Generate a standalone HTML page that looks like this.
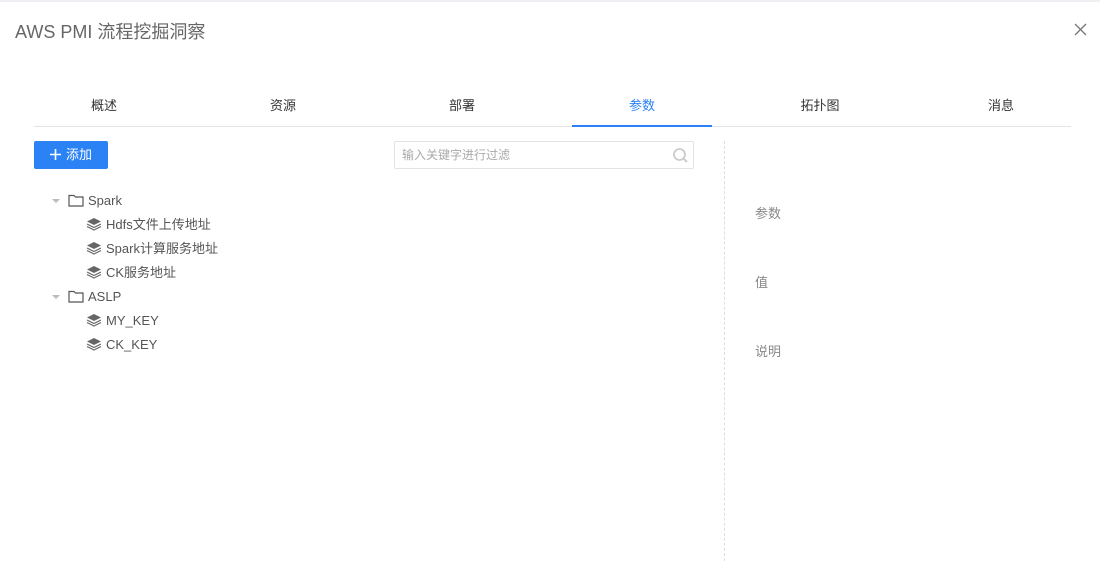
<!DOCTYPE html>
<html><head><meta charset="utf-8"><style>
*{margin:0;padding:0;box-sizing:border-box}
body{width:1100px;height:557px;background:#fff;font-family:"Liberation Sans","Noto Sans CJK SC",sans-serif;position:relative;overflow:hidden;color:#333}
.topline{position:absolute;left:0;top:0;width:1100px;height:2px;background:#eef0f3}
.title{position:absolute;left:15px;top:18px;font-size:18px;color:#666}
.close{position:absolute;left:1073px;top:22px}
.tabs{position:absolute;left:34px;top:94px;width:1037px;height:33px;border-bottom:1px solid #e2e4ea}
.tab{position:absolute;top:0;width:140px;text-align:center;font-size:13px;line-height:24px;color:#333}
.tab.act{color:#2b82f5;border-bottom:2px solid #2b82f5;height:33px}
.btn{position:absolute;left:34px;top:141px;width:74px;height:28px;background:#2b82f5;border-radius:2px;color:#fff;font-size:13px;line-height:28px;padding-left:32px}
.search{position:absolute;left:394px;top:141px;width:300px;height:28px;border:1px solid #e3e3e3;border-radius:2px;font-size:12px;color:#aaa;line-height:26px;padding-left:7px}
.vline{position:absolute;left:724px;top:141px;height:420px;border-left:1px dashed #ddd}
.row{position:absolute;font-size:13px;color:#555;line-height:16px}
.lbl{position:absolute;left:755px;font-size:13px;color:#888}
</style></head><body>
<div class="topline"></div>
<div class="title">AWS PMI 流程挖掘洞察</div>
<svg class="close" width="15" height="15" viewBox="0 0 15 15"><path d="M2 2L13 13M13 2L2 13" stroke="#777" stroke-width="1.3"/></svg>
<div class="tabs">
<div class="tab" style="left:0px">概述</div>
<div class="tab" style="left:179px">资源</div>
<div class="tab" style="left:358px">部署</div>
<div class="tab act" style="left:538px">参数</div>
<div class="tab" style="left:716px">拓扑图</div>
<div class="tab" style="left:897px">消息</div>
</div>
<div class="btn">添加</div>
<svg style="position:absolute;left:49px;top:148px" width="13" height="13"><path d="M6.5 1V12M1 6.5H12" stroke="#fff" stroke-width="1.6"/></svg>
<div class="search">输入关键字进行过滤</div>
<svg style="position:absolute;left:672px;top:147px" width="17" height="17"><circle cx="7.5" cy="7.5" r="5.5" fill="none" stroke="#ccc" stroke-width="1.8"/><path d="M11.5 11.5L15 15" stroke="#ccc" stroke-width="2"/></svg>
<div class="vline"></div>

<svg width="0" height="0" style="position:absolute"><defs>
<symbol id="fold" viewBox="0 0 16 14"><path d="M1 2.5H6L7.5 4H15V13H1Z" fill="none" stroke="#555" stroke-width="1.2"/></symbol>
<symbol id="lay" viewBox="0 0 16 14"><path d="M8 1L15 4.5L8 8L1 4.5Z" fill="#666"/><path d="M1 7L8 10.5L15 7M1 9.5L8 13L15 9.5" fill="none" stroke="#666" stroke-width="1.2"/></symbol>
<symbol id="car" viewBox="0 0 8 6"><path d="M0 1H8L4 5Z" fill="#bbb"/></symbol>
</defs></svg>

<svg style="position:absolute;left:52px;top:198px" width="8" height="6"><use href="#car"/></svg>
<svg style="position:absolute;left:68px;top:193px" width="16" height="14"><use href="#fold"/></svg>
<div class="row" style="left:88px;top:193px">Spark</div>
<svg style="position:absolute;left:86px;top:217px" width="16" height="14"><use href="#lay"/></svg>
<div class="row" style="left:106px;top:217px">Hdfs文件上传地址</div>
<svg style="position:absolute;left:86px;top:241px" width="16" height="14"><use href="#lay"/></svg>
<div class="row" style="left:106px;top:241px">Spark计算服务地址</div>
<svg style="position:absolute;left:86px;top:265px" width="16" height="14"><use href="#lay"/></svg>
<div class="row" style="left:106px;top:265px">CK服务地址</div>
<svg style="position:absolute;left:52px;top:294px" width="8" height="6"><use href="#car"/></svg>
<svg style="position:absolute;left:68px;top:289px" width="16" height="14"><use href="#fold"/></svg>
<div class="row" style="left:88px;top:289px">ASLP</div>
<svg style="position:absolute;left:86px;top:313px" width="16" height="14"><use href="#lay"/></svg>
<div class="row" style="left:106px;top:313px">MY_KEY</div>
<svg style="position:absolute;left:86px;top:337px" width="16" height="14"><use href="#lay"/></svg>
<div class="row" style="left:106px;top:337px">CK_KEY</div>

<div class="lbl" style="top:203px">参数</div>
<div class="lbl" style="top:272px">值</div>
<div class="lbl" style="top:341px">说明</div>
</body></html>
